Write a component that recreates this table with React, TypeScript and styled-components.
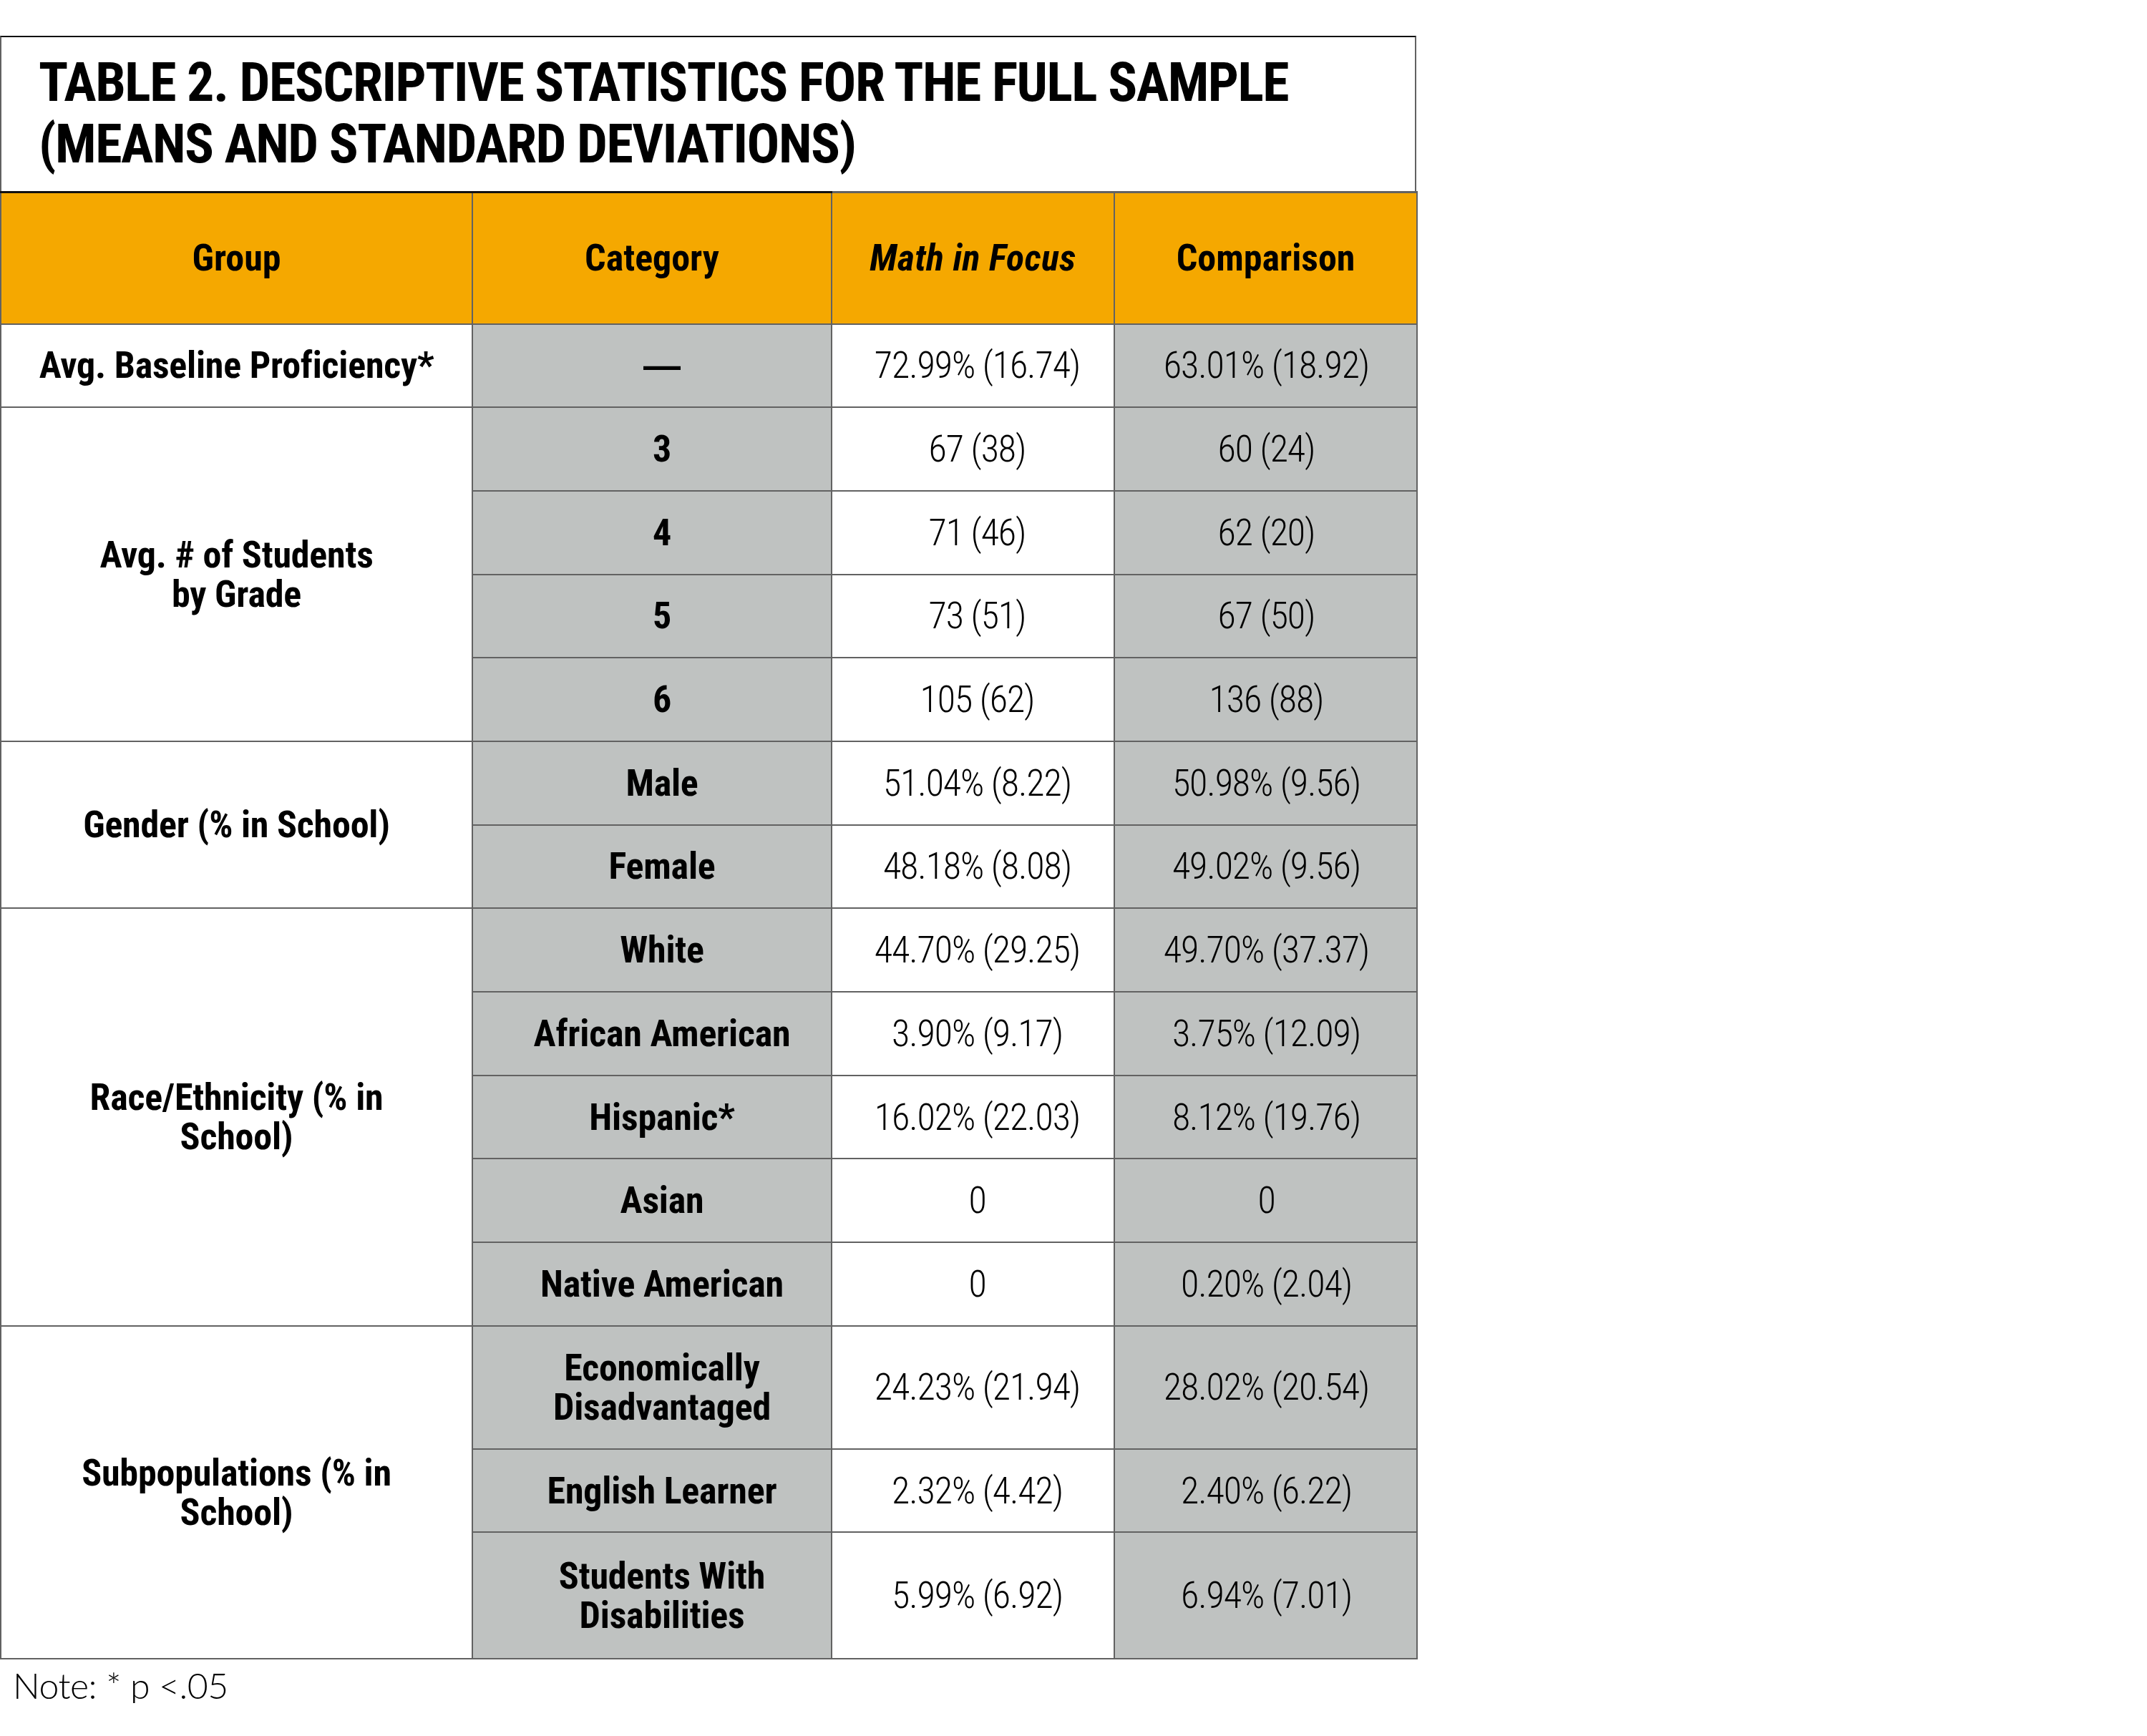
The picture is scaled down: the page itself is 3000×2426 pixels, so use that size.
import React from 'react';
import styled, { createGlobalStyle } from 'styled-components';

const GlobalStyle = createGlobalStyle`
  body {
    margin: 0;
    background: #ffffff;
    color: #000000;
  }
`;

const ORANGE = '#f5a800';
const GRAY = '#bfc2c1';
const LINE = '#626262';

type Tone = 'white' | 'gray' | 'orange';
type Column = 'group' | 'category' | 'mif' | 'comp';

const toneColor: Record<Tone, string> = {
  white: '#ffffff',
  gray: GRAY,
  orange: ORANGE,
};

// the source nudges text in a few columns slightly right of centre
const columnPadding: Record<Column, string> = {
  group: '0 20px',
  category: '0 0 0 28px',
  mif: '0 8px 0 20px',
  comp: '0 18px 0 20px',
};

const Page = styled.div`
  padding-top: 50px;
  width: 1979px;
`;

const TitleBox = styled.div`
  box-sizing: border-box;
  height: 217px;
  display: flex;
  align-items: center;
  padding: 0 52px 4px;
  border-top: 2px solid #111111;
  border-left: 2px solid ${LINE};
  border-right: 2px solid ${LINE};
`;

const Title = styled.h1`
  margin: 0;
  font-family: Roboto, 'Liberation Sans', sans-serif;
  font-stretch: condensed;
  font-weight: 700;
  font-size: 76px;
  line-height: 86px;
  letter-spacing: -1.5px;
  text-transform: uppercase;
`;

const Table = styled.table`
  width: 1979px;
  table-layout: fixed;
  border-collapse: collapse;
  font-family: Roboto, 'Liberation Sans', sans-serif;
  font-stretch: condensed;
  font-size: 52px;
  line-height: 55px;
`;

const Row = styled.tr<{ $h: number }>`
  height: ${(p) => p.$h}px;
`;

const HeadCell = styled.th<{ $dark?: boolean; $italic?: boolean }>`
  padding: 0;
  background: ${ORANGE};
  border: 2px solid ${LINE};
  border-top: 3px solid ${(p) => (p.$dark ? '#111111' : LINE)};
  font-weight: 700;
  font-style: ${(p) => (p.$italic ? 'italic' : 'normal')};
  letter-spacing: ${(p) => (p.$italic ? '0.4px' : '0')};
  text-align: center;
  vertical-align: middle;
`;

const Cell = styled.td<{ $tone: Tone; $col: Column; $bold?: boolean }>`
  padding: ${(p) => columnPadding[p.$col]};
  background: ${(p) => toneColor[p.$tone]};
  border: 2px solid ${LINE};
  font-weight: ${(p) => (p.$bold ? 700 : 300)};
  letter-spacing: ${(p) => (p.$bold ? '-0.2px' : '-1.1px')};
  text-align: center;
  vertical-align: middle;
`;

const Dash = styled.span`
  font-family: 'Liberation Sans', sans-serif;
  font-stretch: normal;
  font-weight: 700;
`;

const Note = styled.p`
  margin: 11px 0 0 18px;
  font-family: Lato, 'Open Sans', sans-serif;
  font-weight: 300;
  font-size: 50px;
  line-height: 1;
  letter-spacing: -0.5px;
`;

type Line = { category: React.ReactNode; mif: string; comp: string; h?: number };
type Block = { group: React.ReactNode; lines: Line[] };

const blocks: Block[] = [
  {
    group: 'Avg. Baseline Proficiency*',
    lines: [{ category: <Dash>—</Dash>, mif: '72.99% (16.74)', comp: '63.01% (18.92)' }],
  },
  {
    group: (
      <>
        Avg. # of Students
        <br />
        by Grade
      </>
    ),
    lines: [
      { category: '3', mif: '67 (38)', comp: '60 (24)' },
      { category: '4', mif: '71 (46)', comp: '62 (20)' },
      { category: '5', mif: '73 (51)', comp: '67 (50)' },
      { category: '6', mif: '105 (62)', comp: '136 (88)' },
    ],
  },
  {
    group: 'Gender (% in School)',
    lines: [
      { category: 'Male', mif: '51.04% (8.22)', comp: '50.98% (9.56)' },
      { category: 'Female', mif: '48.18% (8.08)', comp: '49.02% (9.56)' },
    ],
  },
  {
    group: (
      <>
        Race/Ethnicity (% in
        <br />
        School)
      </>
    ),
    lines: [
      { category: 'White', mif: '44.70% (29.25)', comp: '49.70% (37.37)' },
      { category: 'African American', mif: '3.90% (9.17)', comp: '3.75% (12.09)' },
      { category: 'Hispanic*', mif: '16.02% (22.03)', comp: '8.12% (19.76)' },
      { category: 'Asian', mif: '0', comp: '0' },
      { category: 'Native American', mif: '0', comp: '0.20% (2.04)' },
    ],
  },
  {
    group: (
      <>
        Subpopulations (% in
        <br />
        School)
      </>
    ),
    lines: [
      {
        category: (
          <>
            Economically
            <br />
            Disadvantaged
          </>
        ),
        mif: '24.23% (21.94)',
        comp: '28.02% (20.54)',
        h: 172,
      },
      { category: 'English Learner', mif: '2.32% (4.42)', comp: '2.40% (6.22)' },
      {
        category: (
          <>
            Students With
            <br />
            Disabilities
          </>
        ),
        mif: '5.99% (6.92)',
        comp: '6.94% (7.01)',
        h: 177,
      },
    ],
  },
];

export default function App() {
  return (
    <Page>
      <GlobalStyle />
      <TitleBox>
        <Title>
          Table 2. Descriptive Statistics for the Full Sample
          <br />
          (Means and Standard Deviations)
        </Title>
      </TitleBox>
      <Table>
        <colgroup>
          <col style={{ width: 659 }} />
          <col style={{ width: 502 }} />
          <col style={{ width: 395 }} />
          <col style={{ width: 423 }} />
        </colgroup>
        <thead>
          <Row $h={184}>
            <HeadCell $dark>Group</HeadCell>
            <HeadCell $dark>Category</HeadCell>
            <HeadCell $italic>Math in Focus</HeadCell>
            <HeadCell>Comparison</HeadCell>
          </Row>
        </thead>
        <tbody>
          {blocks.map((block, bi) =>
            block.lines.map((line, li) => (
              <Row key={`${bi}-${li}`} $h={line.h ?? 116.7}>
                {li === 0 && (
                  <Cell $tone="white" $col="group" $bold rowSpan={block.lines.length}>
                    {block.group}
                  </Cell>
                )}
                <Cell $tone="gray" $col="category" $bold>
                  {line.category}
                </Cell>
                <Cell $tone="white" $col="mif">
                  {line.mif}
                </Cell>
                <Cell $tone="gray" $col="comp">
                  {line.comp}
                </Cell>
              </Row>
            ))
          )}
        </tbody>
      </Table>
      <Note>Note: * p &lt;.05</Note>
    </Page>
  );
}
